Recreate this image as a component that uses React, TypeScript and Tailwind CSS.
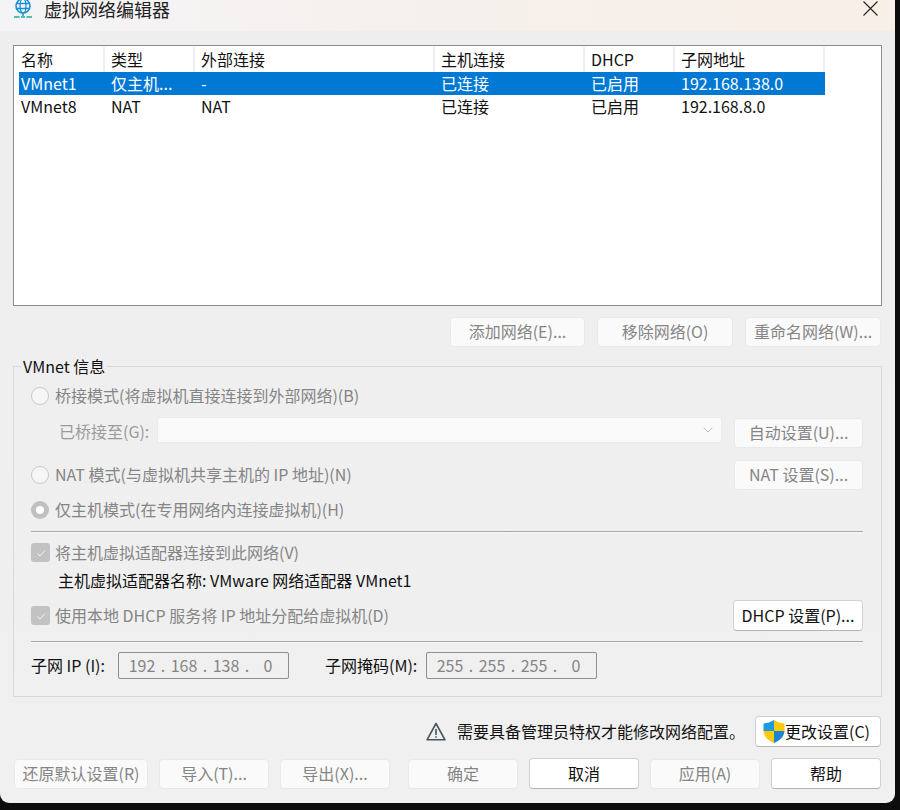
import { ChevronDown } from 'lucide-react';

const COLUMNS = [
  { label: '名称', cls: 'w-[86px] pl-[2px]' },
  { label: '类型', cls: 'w-[90px] pl-[6px]' },
  { label: '外部连接', cls: 'w-[240px] pl-[6px]' },
  { label: '主机连接', cls: 'w-[150px] pl-[6px]' },
  { label: 'DHCP', cls: 'w-[90px] pl-[6px]' },
  { label: '子网地址', cls: 'w-[150px] pl-[6px]' },
];

const ROWS = [
  { selected: true, cells: ['VMnet1', '仅主机...', '-', '已连接', '已启用', '192.168.138.0'] },
  { selected: false, cells: ['VMnet8', 'NAT', 'NAT', '已连接', '已启用', '192.168.8.0'] },
];

function Btn({ label, width, disabled, className = '' }: { label: string; width: string; disabled?: boolean; className?: string }) {
  return (
    <button
      className={`${width} ${className} flex shrink-0 items-center justify-center whitespace-nowrap rounded-[4px] border pb-[2px] ${
        disabled
          ? 'border-[#e9e9e9] bg-[#fafafa] text-[#858585]'
          : 'border-[#d2d2d2] border-b-[#b4b4b4] bg-white text-[#111]'
      }`}
    >
      {label}
    </button>
  );
}

function Radio({ checked }: { checked?: boolean }) {
  return checked ? (
    <span className="flex h-[18px] w-[18px] shrink-0 items-center justify-center rounded-full bg-[#c0c0c0]">
      <span className="h-[8px] w-[8px] rounded-full bg-white" />
    </span>
  ) : (
    <span className="h-[18px] w-[18px] shrink-0 rounded-full border border-[#c8c8c8] bg-[#f6f6f6]" />
  );
}

function Check() {
  return (
    <span className="flex h-[19px] w-[19px] shrink-0 items-center justify-center rounded-[3px] bg-[#c2c2c2]">
      <svg viewBox="0 0 10 10" className="h-[10px] w-[10px]" fill="none" stroke="#f4f4f4" strokeWidth="1">
        <path d="M1.5 5.5 4 8l5-5.5" />
      </svg>
    </span>
  );
}

function Sep() {
  return <div className="h-[2px] w-[832px] border-t border-[#a8a8a8] bg-[#f8f8f8]" />;
}

function IpField({ parts }: { parts: string[] }) {
  return (
    <div className="flex h-[27px] w-[171px] items-center rounded-[2px] border border-[#8e8e8e] pb-[2px] pl-[5px] text-[#858585]">
      {parts.map((p, i) => (
        <span key={i} className="flex items-center">
          <span className="w-[36px] text-center">{p}</span>
          {i < 3 && <span className="w-[6px] text-center">.</span>}
        </span>
      ))}
    </div>
  );
}

function GlobeIcon() {
  return (
    <svg viewBox="0 0 18 20" className="h-[20px] w-[18px] shrink-0" fill="none">
      <circle cx="9" cy="7" r="7" stroke="#1a8fd8" strokeWidth="1.6" />
      <ellipse cx="9" cy="7" rx="3" ry="7" stroke="#1a8fd8" strokeWidth="1.3" />
      <path d="M2 4.5h14M2 9.5h14" stroke="#1a8fd8" strokeWidth="1.3" />
      <path d="M9 14v3" stroke="#2a9d9d" strokeWidth="1.6" />
      <path d="M0 18h5.5M7 18h4M12.5 18H18" stroke="#1fa8a0" strokeWidth="1.3" />
    </svg>
  );
}

function ShieldIcon() {
  return (
    <svg viewBox="0 0 22 23" className="h-[23px] w-[22px] shrink-0">
      <path d="M11 0 C8 2 4 3.2 0.5 3.5 V11 H11Z" fill="#1b9ae0" />
      <path d="M11 0 C14 2 18 3.2 21.5 3.5 V11 H11Z" fill="#fdc90b" />
      <path d="M0.5 11 C0.8 16.5 5 20.5 11 23 V11Z" fill="#fdc90b" />
      <path d="M21.5 11 C21.2 16.5 17 20.5 11 23 V11Z" fill="#1b86d0" />
    </svg>
  );
}

function WarnIcon() {
  return (
    <svg viewBox="0 0 20 19" className="h-[19px] w-[20px] shrink-0" fill="none" stroke="#46555f">
      <path d="M10 1.5 19 17.8H1Z" strokeWidth="1.6" strokeLinejoin="round" />
      <path d="M10 7v6" strokeWidth="1.6" />
      <path d="M10 14.2v1.6" strokeWidth="1.6" />
    </svg>
  );
}

function NetworkTable() {
  return (
    <div className="h-[261px] w-[869px] border border-[#8b8b96] bg-white pl-[5px] pt-[1px]">
      <div className="flex h-[25px] items-center">
        {COLUMNS.map((c) => (
          <div key={c.label} className={`${c.cls} flex h-full items-center border-r-2 border-[#eeeeee] pb-[2px] text-[#111]`}>
            {c.label}
          </div>
        ))}
      </div>
      {ROWS.map((row) => (
        <div
          key={row.cells[0]}
          className={`flex h-[23px] w-[806px] items-center pb-[2px] ${row.selected ? 'bg-[#0078d4] text-white' : 'text-[#111]'}`}
        >
          {row.cells.map((cell, i) => (
            <div key={i} className={`${COLUMNS[i].cls} whitespace-nowrap`}>
              {cell}
            </div>
          ))}
        </div>
      ))}
    </div>
  );
}

function VmnetInfo() {
  return (
    <div className="relative mt-[19px] h-[331px] w-[869px] border border-[#d9d9d9] pl-[17px] pt-[20px] text-[#858585]">
      <span className="absolute left-[7px] top-[-10px] bg-[#efefef] px-[2px] leading-[18px] text-[#111]">VMnet 信息</span>

      <div className="flex h-[18px] items-center gap-[6px]">
        <Radio />
        <span className="pb-[2px]">桥接模式(将虚拟机直接连接到外部网络)(B)</span>
      </div>

      <div className="mt-[12px] flex h-[30px] w-[832px] items-start">
        <span className="ml-[28px] w-[98px] leading-[28px] text-[#9a9a9a]">已桥接至(G):</span>
        <div className="flex h-[26px] w-[565px] items-center justify-end rounded-[2px] border border-[#ebebeb] bg-[#fafafa] pr-[5px]">
          <ChevronDown className="h-[16px] w-[16px] text-[#a8a8a8]" strokeWidth={1.2} />
        </div>
        <Btn label="自动设置(U)..." width="w-[129px] h-[30px]" disabled className="ml-auto mt-[1px]" />
      </div>

      <div className="mt-[13px] flex h-[29px] w-[832px] items-center gap-[6px]">
        <Radio />
        <span className="pb-[2px]">NAT 模式(与虚拟机共享主机的 IP 地址)(N)</span>
        <Btn label="NAT 设置(S)..." width="w-[129px] h-[30px]" disabled className="ml-auto" />
      </div>

      <div className="mt-[12px] flex h-[18px] items-center gap-[6px]">
        <Radio checked />
        <span className="pb-[2px]">仅主机模式(在专用网络内连接虚拟机)(H)</span>
      </div>

      <div className="mt-[12px]">
        <Sep />
      </div>

      <div className="mt-[10px] flex h-[19px] items-center gap-[5px]">
        <Check />
        <span className="pb-[2px]">将主机虚拟适配器连接到此网络(V)</span>
      </div>

      <div className="ml-[27px] mt-[9px] h-[20px] leading-[18px] text-[#111]">主机虚拟适配器名称: VMware 网络适配器 VMnet1</div>

      <div className="mt-[9px] flex h-[31px] w-[832px] items-center gap-[5px]">
        <Check />
        <span className="pb-[2px]">使用本地 DHCP 服务将 IP 地址分配给虚拟机(D)</span>
        <Btn label="DHCP 设置(P)..." width="w-[130px] h-[31px]" className="ml-auto" />
      </div>

      <div className="mt-[10px]">
        <Sep />
      </div>

      <div className="mt-[9px] flex h-[27px] items-center text-[#111]">
        <span className="w-[87px] pb-[2px]">子网 IP (I):</span>
        <IpField parts={['192', '168', '138', '0']} />
        <span className="ml-[36px] w-[101px] pb-[2px]">子网掩码(M):</span>
        <IpField parts={['255', '255', '255', '0']} />
      </div>
    </div>
  );
}

export default function App() {
  return (
    <div
      className="flex h-[810px] w-[900px] items-start overflow-hidden bg-[#0d0d0d] text-[16px] leading-[22px]"
      style={{ fontFamily: '"Noto Sans CJK SC", "Noto Sans", sans-serif' }}
    >
      <div className="h-[803px] w-[895px] overflow-hidden rounded-b-[9px] bg-gradient-to-b from-[#eeeeee] to-[#f0f0f0]">
        {/* Title bar */}
        <div className="flex h-[31px] items-start bg-gradient-to-r from-[#f4f4f7] via-[#f6f0ec] to-[#f8efe7] pl-[14px] pr-[17px]">
          <div className="-mt-[1px]">
            <GlobeIcon />
          </div>
          <span className="ml-[12px] text-[18px] leading-[18px] text-[#222]">虚拟网络编辑器</span>
          <svg viewBox="0 0 15 15" className="ml-auto mt-[1px] h-[15px] w-[15px]" stroke="#222" strokeWidth="1.1">
            <path d="M0.5 0.5 14.5 14.5M14.5 0.5 0.5 14.5" />
          </svg>
        </div>

        <div className="pl-[13px] pt-[14px]">
          <NetworkTable />

          <div className="mt-[11px] flex h-[30px] w-[868px] justify-end gap-[12px]">
            <Btn label="添加网络(E)..." width="w-[135px] h-[30px]" disabled />
            <Btn label="移除网络(O)" width="w-[136px] h-[30px]" disabled />
            <Btn label="重命名网络(W)..." width="w-[136px] h-[30px]" disabled />
          </div>

          <VmnetInfo />

          <div className="mt-[19px] flex h-[31px] w-[868px] items-center justify-end">
            <WarnIcon />
            <span className="ml-[11px] pb-[2px] text-[#111]">需要具备管理员特权才能修改网络配置。</span>
            <button className="ml-[10px] flex h-[31px] w-[126px] items-center rounded-[4px] border border-[#d2d2d2] border-b-[#b4b4b4] bg-white pl-[7px] text-[#111]">
              <ShieldIcon />
              <span className="whitespace-nowrap pb-[2px]">更改设置(C)</span>
            </button>
          </div>

          <div className="mt-[11px] flex h-[31px] w-[868px] items-center">
            <Btn label="还原默认设置(R)" width="w-[134px] h-[30px]" disabled className="ml-[1px]" />
            <Btn label="导入(T)..." width="w-[110px] h-[30px]" disabled className="ml-[11px]" />
            <Btn label="导出(X)..." width="w-[110px] h-[30px]" disabled className="ml-[11px]" />
            <Btn label="确定" width="w-[110px] h-[30px]" disabled className="ml-[18px]" />
            <Btn label="取消" width="w-[110px] h-[31px]" className="ml-[11px]" />
            <Btn label="应用(A)" width="w-[110px] h-[30px]" disabled className="ml-[11px]" />
            <Btn label="帮助" width="w-[110px] h-[31px]" className="ml-[11px]" />
          </div>
        </div>
      </div>
    </div>
  );
}
